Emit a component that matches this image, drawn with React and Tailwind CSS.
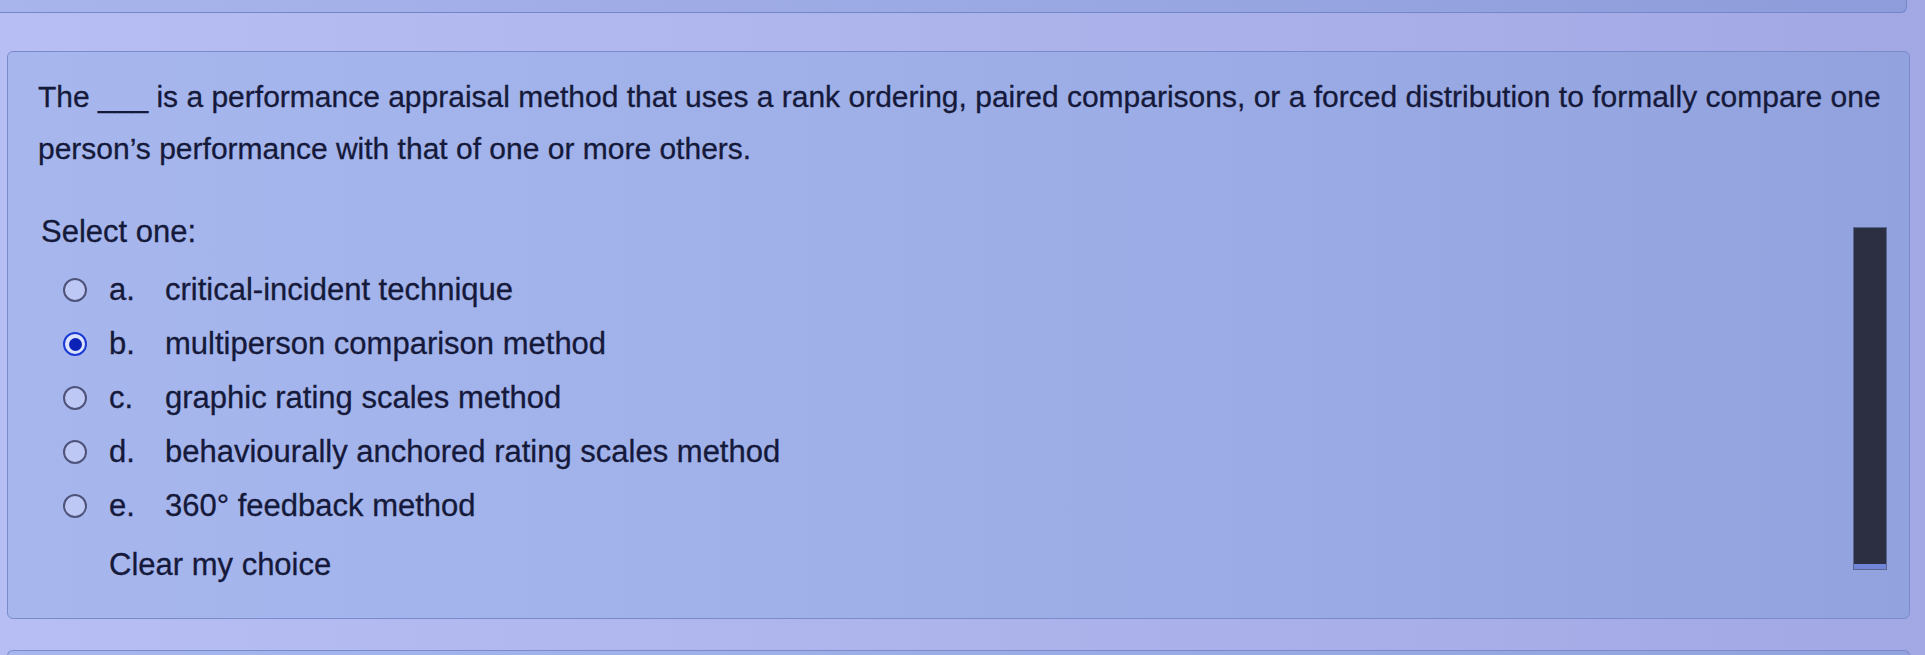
import React from "react";

const options = [
  { letter: "a.", text: "critical-incident technique" },
  { letter: "b.", text: "multiperson comparison method", checked: true },
  { letter: "c.", text: "graphic rating scales method" },
  { letter: "d.", text: "behaviourally anchored rating scales method" },
  { letter: "e.", text: "360° feedback method" },
];

const Radio = ({ checked }) =>
  checked ? (
    <span className="flex h-[24px] w-[24px] items-center justify-center rounded-full border-[2.5px] border-[#1c3ad4] bg-[#dbe3ff]">
      <span className="h-[13px] w-[13px] rounded-full bg-[#0c22b6]" />
    </span>
  ) : (
    <span className="h-[24px] w-[24px] rounded-full border-[2.5px] border-[#4f5379] bg-[#bdc8f4]" />
  );

export default function App() {
  return (
    <div
      className="flex h-[655px] w-full flex-col overflow-hidden bg-gradient-to-r from-[#b7bef3] via-[#adb4ec] to-[#a2a8e4] text-[#15193a] [-webkit-text-stroke:0.3px_#15193a]"
      style={{ fontFamily: '"Liberation Sans", Arial, sans-serif' }}
    >
      {/* previous question card, mostly off screen */}
      <div className="h-[13px] w-[1907px] shrink-0 rounded-br-md border-b border-r border-[#7485c8] bg-gradient-to-r from-[#a8b5ec] to-[#8e9cdb]" />

      {/* current question card */}
      <div className="ml-[7px] mt-[38px] flex h-[568px] w-[1903px] shrink-0 flex-col rounded-md border border-[#7a8bcc] bg-gradient-to-r from-[#a7b7ee] via-[#9eafe8] to-[#92a2de] pl-[30px] pr-[22px] pt-[19px]">
        <p className="whitespace-nowrap text-[30px] leading-[52px]">
          The ___ is a performance appraisal method that uses a rank ordering, paired comparisons, or a forced distribution to formally compare one
          <br />
          person’s performance with that of one or more others.
        </p>

        <div className="mt-[31px] flex">
          <div className="flex-1">
            <div className="pl-[3px] text-[31px] leading-[52px]">Select one:</div>
            <div className="mt-[5px] flex flex-col">
              {options.map((o) => (
                <div key={o.letter} className="flex h-[54px] items-center pl-[25px] text-[31px]">
                  <Radio checked={o.checked} />
                  <span className="ml-[22px] w-[56px]">{o.letter}</span>
                  <span>{o.text}</span>
                </div>
              ))}
            </div>
            <div className="mt-[6px] pl-[71px] text-[31px] leading-[52px]">Clear my choice</div>
          </div>

          <div className="mt-[21px] flex h-[343px] w-[34px] flex-col overflow-hidden border border-[#5b6690] bg-[#2b2f41]">
            <div className="flex-1" />
            <div className="h-[5px] bg-[#7186d8]" />
          </div>
        </div>
      </div>

      {/* next card edge */}
      <div className="ml-[7px] mt-[31px] h-[20px] w-[1903px] shrink-0 rounded-t-md border-l border-r border-t border-[#7a8bcc] bg-gradient-to-r from-[#a7b7ee] to-[#92a2de]" />
    </div>
  );
}
